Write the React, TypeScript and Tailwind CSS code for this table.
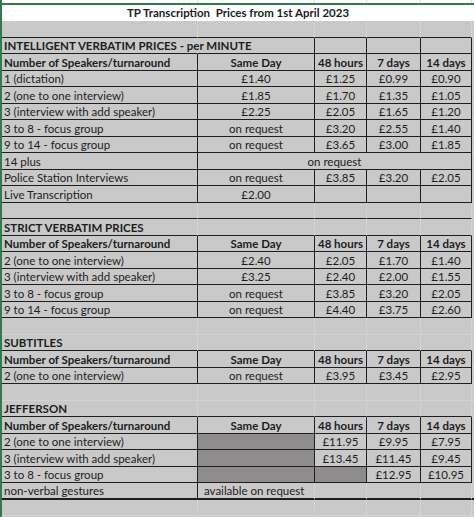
import React from "react";

type R = "K" | "G" | "N";
type B = "K" | "G" | "K2" | "W";
type CellDef = {
  w: string;
  t?: string;
  al?: "l" | "c" | "lp";
  bold?: boolean;
  r: R;
  b: B;
  dark?: boolean;
};

const RC: Record<R, string> = {
  K: "border-r border-r-[#1e1e1e]",
  G: "border-r border-r-[#d3d3d3]",
  N: "border-r border-r-transparent",
};
const BC: Record<B, string> = {
  K: "border-b border-b-[#1e1e1e]",
  G: "border-b border-b-[#d3d3d3]",
  K2: "border-b-2 border-b-[#1e1e1e]",
  W: "border-b border-b-[#d3d3d3]",
};
const AL = {
  l: "justify-start pl-[2px]",
  c: "justify-center",
  lp: "justify-start pl-[6px]",
};

const W = ["w-[196px]", "w-[117px]", "w-[52px]", "w-[54px]", "w-[51px]"];

function full(a: string, vals: string[], opts: { bold?: boolean; b?: B; dark?: number[] } = {}): CellDef[] {
  const b = opts.b ?? "K";
  return [
    { w: W[0], t: a, al: "l", bold: opts.bold, r: "K", b },
    ...vals.map((v, i) => ({
      w: W[i + 1],
      t: v,
      al: "c" as const,
      bold: opts.bold,
      r: "K" as R,
      b,
      dark: opts.dark?.includes(i + 1),
    })),
  ];
}

function empty(b: B, r: R = "G"): CellDef[] {
  return W.map((w) => ({ w, r, b }));
}

function sectionHead(t: string, b: B, rr: R[]): CellDef[] {
  return [
    { w: W[0], t, al: "l", bold: true, r: rr[0], b },
    { w: W[1], r: rr[1], b },
    { w: W[2], r: rr[2], b },
    { w: W[3], r: rr[3], b },
    { w: W[4], r: rr[4], b },
  ];
}

const HDR = ["Same Day", "48 hours", "7 days", "14 days"];

const rows: CellDef[][] = [
  empty("K"),
  sectionHead("INTELLIGENT VERBATIM PRICES - per MINUTE", "K", ["N", "K", "K", "K", "K"]),
  full("Number of Speakers/turnaround", HDR, { bold: true }),
  full("1 (dictation)", ["£1.40", "£1.25", "£0.99", "£0.90"]),
  full("2 (one to one interview)", ["£1.85", "£1.70", "£1.35", "£1.05"]),
  full("3 (interview with add speaker)", ["£2.25", "£2.05", "£1.65", "£1.20"]),
  full("3 to 8 - focus group", ["on request", "£3.20", "£2.55", "£1.40"]),
  full("9 to 14 - focus group", ["on request", "£3.65", "£3.00", "£1.85"]),
  [
    { w: W[0], t: "14 plus", al: "l", r: "K", b: "K" },
    { w: "w-[274px]", t: "on request", al: "c", r: "K", b: "K" },
  ],
  full("Police Station Interviews", ["on request", "£3.85", "£3.20", "£2.05"]),
  full("Live Transcription", ["£2.00", "", "", ""]),
  empty("K"),
  sectionHead("STRICT VERBATIM PRICES", "K", ["G", "G", "G", "G", "G"]),
  full("Number of Speakers/turnaround", HDR, { bold: true }),
  full("2 (one to one interview)", ["£2.40", "£2.05", "£1.70", "£1.40"]),
  full("3 (interview with add speaker)", ["£3.25", "£2.40", "£2.00", "£1.55"]),
  full("3 to 8 - focus group", ["on request", "£3.85", "£3.20", "£2.05"]),
  full("9 to 14 - focus group", ["on request", "£4.40", "£3.75", "£2.60"]),
  empty("G"),
  sectionHead("SUBTITLES", "K", ["G", "G", "G", "G", "G"]),
  full("Number of Speakers/turnaround", HDR, { bold: true }),
  full("2 (one to one interview)", ["on request", "£3.95", "£3.45", "£2.95"]),
  empty("G"),
  sectionHead("JEFFERSON", "K", ["G", "G", "G", "G", "G"]),
  full("Number of Speakers/turnaround", HDR, { bold: true }),
  full("2 (one to one interview)", ["", "£11.95", "£9.95", "£7.95"], { dark: [1] }),
  full("3 (interview with add speaker)", ["", "£13.45", "£11.45", "£9.45"], { dark: [1] }),
  full("3 to 8 - focus group", ["", "", "£12.95", "£10.95"], { dark: [1, 2] }),
  [
    { w: W[0], t: "non-verbal gestures", al: "l", r: "K", b: "K2" },
    { w: W[1], t: "available on request", al: "lp", r: "G", b: "K2" },
    { w: W[2], r: "G", b: "K2" },
    { w: W[3], r: "G", b: "K2" },
    { w: W[4], r: "G", b: "K2" },
  ],
  empty("G"),
];

export default function App() {
  return (
    <div
      className="w-[474px] h-[517px] overflow-hidden bg-white flex text-[11.5px] text-[#1d1d1d]"
      style={{ fontFamily: "Lato, 'Open Sans', sans-serif" }}
    >
      <div className="w-[2px] h-full bg-[#2f7d4f] shrink-0" />
      <div className="flex-1 flex flex-col">
        <div className="h-[3px] flex shrink-0">
          {W.map((w, i) => (
            <div key={i} className={`${w} h-full border-r border-r-[#e2e2e2]`} />
          ))}
        </div>
        <div className="h-[2px] bg-[#2f7d4f] shrink-0" />
        <div className="h-[16px] bg-white flex items-center justify-center font-bold whitespace-pre shrink-0 leading-none">
          TP Transcription  Prices from 1st April 2023
        </div>
        <div className="flex-1 bg-[#c9c9c9] flex flex-col">
          {rows.map((cells, ri) => (
            <div key={ri} className={`${ri % 2 === 0 ? "h-[17px]" : "h-[16px]"} flex shrink-0`}>
              {cells.map((c, ci) => (
                <div
                  key={ci}
                  className={`${c.w} h-full shrink-0 flex items-center whitespace-nowrap leading-none pt-[1px] ${RC[c.r]} ${BC[c.b]} ${AL[c.al ?? "c"]} ${c.bold ? "font-bold" : ""} ${c.dark ? "bg-[#8e8c8c]" : ""} ${ci === 0 && c.r === "N" ? "overflow-visible z-10" : "overflow-visible"}`}
                >
                  {c.t}
                </div>
              ))}
              <div className={`flex-1 h-full ${cells[0].b === "K2" ? "border-b-2 border-b-[#1e1e1e]" : "border-b border-b-[#d3d3d3]"}`} />
            </div>
          ))}
        </div>
      </div>
    </div>
  );
}
